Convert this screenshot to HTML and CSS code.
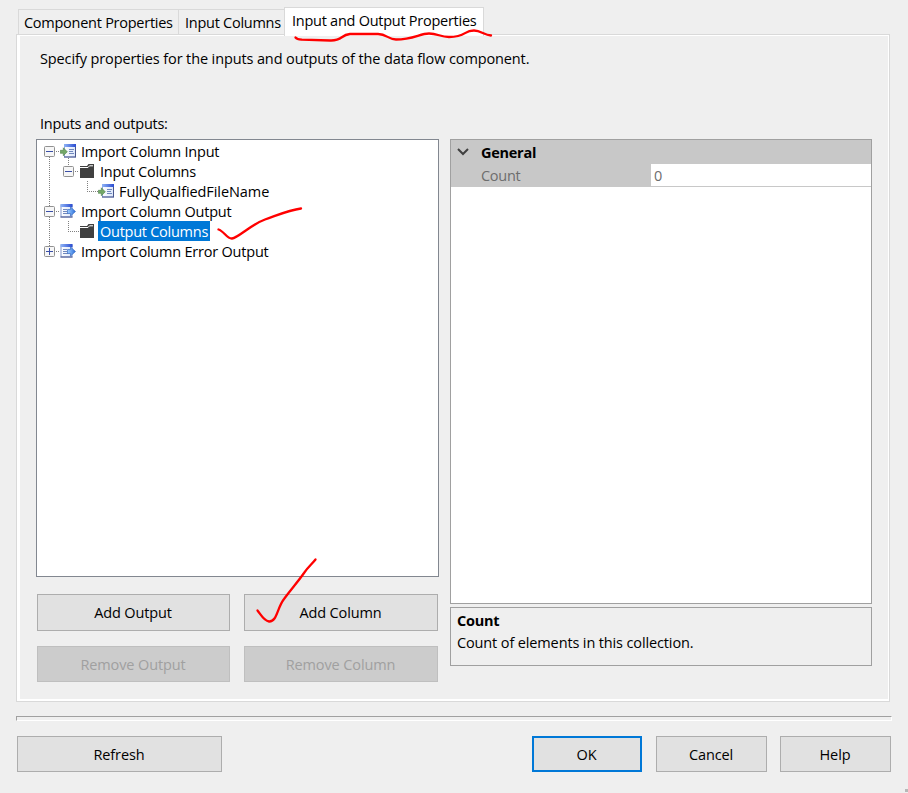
FILE: index.html
```
<!DOCTYPE html>
<html lang="en">
<head>
	<meta charset="UTF-8">
	<title>Advanced Editor</title>
	<link rel="stylesheet" href="styles.css">
</head>
<body>

<!-- shared tree glyphs -->
<svg class="defs" width="0" height="0">
	<defs>
		<linearGradient id="gBar" x1="0" x2="1"><stop offset="0" stop-color="#8fb4f6"/><stop offset="1" stop-color="#2a4bd0"/></linearGradient>
		<linearGradient id="gPage" x1="0" x2="1"><stop offset="0" stop-color="#ffffff"/><stop offset="1" stop-color="#dbe6fa"/></linearGradient>
		<linearGradient id="gArrow" x1="0" x2="1"><stop offset="0" stop-color="#9cccff"/><stop offset="1" stop-color="#2b6fdc"/></linearGradient>
		<symbol id="minus" viewBox="0 0 11 11">
			<rect x=".5" y=".5" width="10" height="10" rx="1" fill="#f6f6f6" stroke="#919191"/>
			<path d="M2 5.5h7" stroke="#3b4fa7"/>
		</symbol>
		<symbol id="plus" viewBox="0 0 11 11">
			<rect x=".5" y=".5" width="10" height="10" rx="1" fill="#f6f6f6" stroke="#919191"/>
			<path d="M2 5.5h7M5.5 2v7" stroke="#3b4fa7"/>
		</symbol>
		<symbol id="input" viewBox="0 0 16 14">
			<rect x="4.5" y="1" width="11" height="12" fill="url(#gPage)" stroke="#8fa3d8"/>
			<rect x="4" y="0" width="12" height="3" fill="url(#gBar)"/>
			<path d="M9 5.5h5M9 7.5h4M9 9.5h5" stroke="#7088bd"/>
			<path d="M4 13h12M15.5 3v10" stroke="#4a578c"/>
			<path d="M.3 6.300h3V3.800l4 4-4 4V9.300h-3z" fill="#74a868" stroke="#4c7f48" stroke-width=".6"/>
		</symbol>
		<symbol id="output" viewBox="0 0 16 14">
			<rect x="1" y="1" width="11" height="12" fill="url(#gPage)" stroke="#7f93cc"/>
			<rect x=".5" y="0" width="12" height="3" fill="url(#gBar)"/>
			<path d="M3 5.500h4M3 7.500h4M3 9.500h5" stroke="#7088bd"/>
			<path d="M.5 13h12" stroke="#4a578c"/>
			<path d="M7.500 5.500h3V3l5 4.500-5 4.500V9.500h-3z" fill="url(#gArrow)" stroke="#3a6cc0" stroke-width=".7"/>
		</symbol>
		<symbol id="folder" viewBox="0 0 14 14">
			<path d="M0 2h7L8.500 0H14v14H0z" fill="#404040"/>
			<path d="M0 3.500h8L9.500 1.800H13" fill="none" stroke="#fff"/>
		</symbol>
	</defs>
</svg>

<div class="dialog">
	<div class="tabs">
		<div class="tab tab-component"><span>Component Properties</span></div>
		<div class="tab tab-columns"><span>Input Columns</span></div>
		<div class="tab active"><span>Input and Output Properties</span></div>
	</div>

	<div class="panel">
		<p class="intro">Specify properties for the inputs and outputs of the data flow component.</p>
		<p class="caption">Inputs and outputs:</p>

		<div class="columns">
			<div class="left">
				<div class="tree">
					<div class="row root">
						<svg width="42" height="20">
							<path class="dots" d="M12.500 16v4M19 10.500h4M31.500 17v3"/>
							<use href="#minus" x="7" y="5" width="11" height="11"/>
							<use href="#input" x="23" y="3" width="16" height="14"/>
						</svg>
						<span>Import Column Input</span>
					</div>
					<div class="row">
						<svg width="61" height="20">
							<path class="dots" d="M12.500 0v20M31.500 1v4M38 10.500h4"/>
							<use href="#minus" x="26" y="5" width="11" height="11"/>
							<use href="#folder" x="43" y="3" width="14" height="14"/>
						</svg>
						<span>Input Columns</span>
					</div>
					<div class="row leaf">
						<svg width="80" height="20">
							<path class="dots" d="M12.500 0v20M50.500 0v10M50 10.500h11"/>
							<use href="#input" x="61" y="3" width="16" height="14"/>
						</svg>
						<span>FullyQualfiedFileName</span>
					</div>
					<div class="row root">
						<svg width="42" height="20">
							<path class="dots" d="M12.500 0v5M12.500 16v4M19 10.500h4"/>
							<use href="#minus" x="7" y="5" width="11" height="11"/>
							<use href="#output" x="23" y="3" width="16" height="14"/>
						</svg>
						<span>Import Column Output</span>
					</div>
					<div class="row selected">
						<svg width="61" height="20">
							<path class="dots" d="M12.500 0v20M31.500 0v10M31 10.500h11"/>
							<use href="#folder" x="43" y="3" width="14" height="14"/>
						</svg>
						<span>Output Columns</span>
					</div>
					<div class="row root">
						<svg width="42" height="20">
							<path class="dots" d="M12.500 0v5M19 10.500h4"/>
							<use href="#plus" x="7" y="5" width="11" height="11"/>
							<use href="#output" x="23" y="3" width="16" height="14"/>
						</svg>
						<span>Import Column Error Output</span>
					</div>
				</div>
				<div class="actions">
					<button>Add Output</button>
					<button>Add Column</button>
					<button disabled>Remove Output</button>
					<button disabled>Remove Column</button>
				</div>
			</div>

			<div class="right">
				<div class="grid">
					<div class="category">
						<svg width="12" height="8"><path d="M1 1l5 5 5-5" fill="none" stroke="#404040" stroke-width="2"/></svg>
						<b>General</b>
					</div>
					<div class="property">
						<span class="name">Count</span>
						<span class="value">0</span>
					</div>
				</div>
				<div class="help">
					<b>Count</b>
					<p>Count of elements in this collection.</p>
				</div>
			</div>
		</div>
	</div>

	<div class="separator"></div>

	<div class="footer">
		<button class="refresh">Refresh</button>
		<button class="ok">OK</button>
		<button class="cancel">Cancel</button>
		<button class="helpbtn">Help</button>
	</div>

	<div class="grip"></div>

	<!-- red pen marks over the dialog -->
	<svg class="ink" width="908" height="793">
		<path d="M295.500 37.500C297 39.500 299 39.500 302 39.700L330 40.500C343 41 340 35 350 34H378C387 34 388 39.500 396 39.500C413 39.500 420 33.500 429 33.500C438 33.500 440 37 449 37C467 37 463 30.500 474 30.500C481 30.500 484 35 491 35.500"/>
		<path d="M218.500 229.500C224 231 227 239 232 238.500C238 238 251 224.500 265 219.500C278 215 289 210 301 208.500"/>
		<path d="M257.500 610.500C261 615 264 621 269 621.500C277 622 277 608 284 599C292 588 297 583 304 573C308 567 312 564 315.500 559.500"/>
	</svg>
</div>

</body>
</html>
```
FILE: styles.css
```
* {
	box-sizing: border-box;
}

body {
	margin: 0;
	background: #EFEFEF;
	font-family: "Segoe UI", "Open Sans", "Noto Sans", sans-serif;
	font-size: 14.5px;
	line-height: 20px;
	letter-spacing: -0.26px;
	color: #000000;
}

p {
	margin: 0;
}

.defs {
	display: block;
}

.dialog {
	position: relative;
	width: 908px;
	height: 793px;
	padding: 7px 16px 0;
	overflow: hidden;
}

.tabs {
	display: flex;
	align-items: flex-end;
	height: 27px;
	padding-left: 2px;
}

.tab {
	height: 25px;
	padding: 3px 0 0 5px;
	border: 1px solid #D9D9D9;
	border-width: 1px 0 0 1px;
	white-space: nowrap;
}

.tab-component {
	width: 160px;
}

.tab-columns {
	width: 106px;
	padding-left: 6px;
}

.tab.active {
	position: relative;
	width: 200px;
	height: 29px;
	margin-bottom: -2px;
	padding: 3px 0 0 7px;
	border-right-width: 1px;
	background: #FFFFFF;
}

.panel {
	width: 874px;
	height: 668px;
	padding: 14px 16px 0 16px;
	border: 1px solid #D9D9D9;
	box-shadow: inset 3px 0 #FFFFFF, inset -1px 0 #FFFFFF, inset 0 1px #FFFFFF, inset 0 -2px #FFFFFF;
}

.intro {
	padding-left: 7px;
	letter-spacing: -0.12px;
}

.caption {
	margin-top: 45px;
	padding-left: 7px;
}

.columns {
	display: flex;
	gap: 11px;
	margin: 5px 0 0 3px;
}

.left {
	width: 403px;
}

.tree {
	height: 438px;
	padding-top: 1px;
	border: 1px solid #828790;
	background: #FFFFFF;
}

.row {
	display: flex;
	height: 20px;
}

.row svg {
	flex: none;
}

.row span {
	padding: 0 2px;
	line-height: 22px;
	height: 20px;
	white-space: nowrap;
}

.row.root span {
	letter-spacing: -0.21px;
}

.row.leaf span {
	letter-spacing: -0.08px;
}

.row.selected span {
	background: #0078D7;
	color: #FFFFFF;
}

.dots {
	stroke: #808080;
	stroke-dasharray: 1 1;
}

.actions {
	display: grid;
	grid-template-columns: 193px 194px;
	grid-template-rows: 37px 36px;
	gap: 15px 14px;
	margin: 17px 0 0 1px;
}

button {
	padding: 1px 1px 0 0;
	border: 1px solid #ADADAD;
	background: #E1E1E1;
	color: #000000;
	font: inherit;
	letter-spacing: -0.12px;
}

button:disabled {
	border-color: #BFBFBF;
	background: #CCCCCC;
	color: #A0A0A0;
}

.right {
	width: 422px;
}

.grid {
	height: 465px;
	border: 1px solid #A0A0A0;
	background: #FFFFFF;
}

.category {
	display: flex;
	align-items: center;
	gap: 12px;
	height: 24px;
	padding: 2px 0 0 6px;
	background: #C8C8C8;
}

.category svg {
	margin-top: -3px;
}

.property {
	display: flex;
	height: 23px;
	line-height: 23px;
	background: #C8C8C8;
	color: #6D6D6D;
}

.property .name {
	width: 200px;
	padding-left: 30px;
}

.property .value {
	flex: 1;
	height: 22px;
	padding-left: 3px;
	background: #FFFFFF;
}

.help {
	height: 59px;
	margin-top: 3px;
	padding: 3px 6px;
	border: 1px solid #A0A0A0;
}

.help p {
	margin-top: 2px;
	letter-spacing: -0.13px;
}

.separator {
	width: 876px;
	height: 5px;
	margin-top: 14px;
	border: 1px solid;
	border-color: #A0A0A0 #FFFFFF #FFFFFF #A0A0A0;
}

.footer {
	display: flex;
	height: 36px;
	margin: 15px 0 0 1px;
}

.footer button {
	padding-top: 2px;
}

.refresh {
	width: 205px;
	margin-right: 310px;
}

.ok {
	width: 110px;
	border: 2px solid #0078D7;
}

.cancel {
	width: 111px;
	margin: 0 13px 0 14px;
}

.helpbtn {
	width: 111px;
}

.grip {
	position: absolute;
	right: 0;
	bottom: 1px;
	width: 3px;
	height: 3px;
	background: #B8B8B8;
}

.ink {
	position: absolute;
	left: 0;
	top: 0;
	fill: none;
	stroke: #FF0000;
	stroke-width: 2.3;
	stroke-linecap: round;
	pointer-events: none;
}
```
